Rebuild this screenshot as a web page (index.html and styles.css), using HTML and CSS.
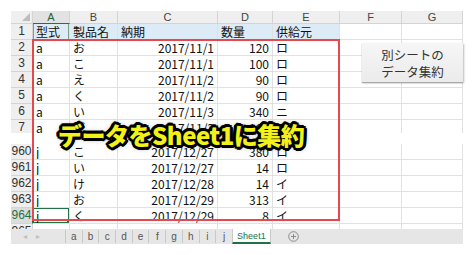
FILE: index.html
```html
<!DOCTYPE html>
<html>
  <head>
    <meta charset="utf-8" />
    <link rel="stylesheet" href="styles.css">
  </head>
  <body>
    <div class="sheet">
      <div class="row head">
        <div class="corner"></div>
        <div class="col cur">A</div>
        <div class="col">B</div>
        <div class="col">C</div>
        <div class="col">D</div>
        <div class="col">E</div>
        <div class="col">F</div>
        <div class="col">G</div>
      </div>

      <div class="row title-row">
        <div class="rh">1</div>
        <div class="c hl a1">型式</div>
        <div class="c hl">製品名</div>
        <div class="c hl">納期</div>
        <div class="c hl">数量</div>
        <div class="c hl">供給元</div>
        <div class="c"></div>
        <div class="c"></div>
      </div>

      <div class="row">
        <div class="rh">2</div>
        <div class="c">a</div><div class="c">お</div><div class="c r">2017/11/1</div><div class="c r">120</div><div class="c">ロ</div><div class="c"></div><div class="c"></div>
      </div>
      <div class="row">
        <div class="rh">3</div>
        <div class="c">a</div><div class="c">こ</div><div class="c r">2017/11/1</div><div class="c r">100</div><div class="c">ロ</div><div class="c"></div><div class="c"></div>
      </div>
      <div class="row">
        <div class="rh">4</div>
        <div class="c">a</div><div class="c">え</div><div class="c r">2017/11/2</div><div class="c r">90</div><div class="c">ロ</div><div class="c"></div><div class="c"></div>
      </div>
      <div class="row">
        <div class="rh">5</div>
        <div class="c">a</div><div class="c">く</div><div class="c r">2017/11/2</div><div class="c r">90</div><div class="c">ロ</div><div class="c"></div><div class="c"></div>
      </div>
      <div class="row">
        <div class="rh">6</div>
        <div class="c">a</div><div class="c">い</div><div class="c r">2017/11/3</div><div class="c r">340</div><div class="c">ニ</div><div class="c"></div><div class="c"></div>
      </div>
      <div class="row short">
        <div class="rh">7</div>
        <div class="c">a</div><div class="c">ど</div><div class="c r">2017/11/3</div><div class="c r">160</div><div class="c">ロ</div><div class="c"></div><div class="c"></div>
      </div>

      <div class="gap"></div>

      <div class="row">
        <div class="rh">960</div>
        <div class="c">j</div><div class="c">こ</div><div class="c r">2017/12/27</div><div class="c r">380</div><div class="c">ロ</div><div class="c"></div><div class="c"></div>
      </div>
      <div class="row">
        <div class="rh">961</div>
        <div class="c">j</div><div class="c">い</div><div class="c r">2017/12/27</div><div class="c r">14</div><div class="c">ロ</div><div class="c"></div><div class="c"></div>
      </div>
      <div class="row">
        <div class="rh">962</div>
        <div class="c">j</div><div class="c">け</div><div class="c r">2017/12/28</div><div class="c r">14</div><div class="c">イ</div><div class="c"></div><div class="c"></div>
      </div>
      <div class="row">
        <div class="rh">963</div>
        <div class="c">j</div><div class="c">お</div><div class="c r">2017/12/29</div><div class="c r">313</div><div class="c">イ</div><div class="c"></div><div class="c"></div>
      </div>
      <div class="row">
        <div class="rh cur">964</div>
        <div class="c sel">j</div><div class="c">く</div><div class="c r">2017/12/29</div><div class="c r">8</div><div class="c">イ</div><div class="c"></div><div class="c"></div>
      </div>
      <div class="row cut">
        <div class="rh">965</div>
        <div class="c"></div><div class="c"></div><div class="c"></div><div class="c"></div><div class="c"></div><div class="c"></div><div class="c"></div>
      </div>

      <div class="tabs">
        <div class="nav"><span>◂</span><span>▸</span></div>
        <div class="tab">a</div>
        <div class="tab">b</div>
        <div class="tab">c</div>
        <div class="tab">d</div>
        <div class="tab">e</div>
        <div class="tab">f</div>
        <div class="tab">g</div>
        <div class="tab">h</div>
        <div class="tab">i</div>
        <div class="tab">j</div>
        <div class="tab active">Sheet1</div>
        <div class="add">
          <svg width="11" height="11" viewBox="0 0 11 11">
            <circle cx="5.5" cy="5.5" r="4.8" fill="none" stroke="#8a8a8a" stroke-width="1"/>
            <path d="M5.5 3v5M3 5.5h5" stroke="#8a8a8a" stroke-width="1"/>
          </svg>
        </div>
      </div>

      <!-- floating objects on the sheet -->
      <div class="range"></div>
      <div class="macro-btn">別シートの<br>データ集約</div>
      <div class="caption">データをSheet1に集約</div>
    </div>
  </body>
</html>
```

FILE: styles.css
```css
body {
  margin: 0;
  background: #fff;
  font-family: "Noto Sans CJK JP", "Noto Sans", sans-serif;
}

.sheet {
  position: relative;
  width: 452px;
  margin: 11px 0 0 11px;
}

.row {
  display: grid;
  grid-template-columns: 22px 37px 48px 100px 55px 67px 62px 61px;
  height: 16px;
}

.row > div {
  box-sizing: border-box;
  border-right: 1px solid #e1e1e1;
  border-bottom: 1px solid #e1e1e1;
  font-size: 12px;
  line-height: 15px;
  white-space: nowrap;
  overflow: hidden;
}

.row.head {
  height: 13px;
}

.row.head > div {
  background: #efefef;
  border-color: #d4d4d4;
  font-family: "Liberation Sans", Arial, sans-serif;
  font-size: 11px;
  line-height: 12px;
  color: #444;
  text-align: center;
}

.row.head .col.cur {
  background: #e2e2e2;
  border-bottom: 1px solid #217346;
  color: #2a5d3c;
}

.corner {
  position: relative;
}

.corner::after {
  content: "";
  position: absolute;
  right: 2px;
  bottom: 2px;
  border-left: 8px solid transparent;
  border-bottom: 8px solid #bdbdbd;
}

.rh {
  background: #efefef;
  border-color: #d4d4d4 !important;
  font-family: "Liberation Sans", Arial, sans-serif;
  color: #333;
  text-align: center;
}

.rh.cur {
  background: #dcdcdc;
  color: #217346;
  border-right: 1px solid #217346 !important;
}

.c {
  padding: 0 3px;
  color: #111;
}

.c.r {
  text-align: right;
}

.c.hl {
  background: #ddebf7;
}

.c.a1 {
  box-shadow: inset 1px 0 0 #7aa08a, inset -1px 0 0 #7aa08a;
}

.c.sel {
  position: relative;
  box-shadow: inset 0 0 0 1px #217346;
}

.c.sel::after {
  content: "";
  position: absolute;
  right: -1px;
  bottom: -1px;
  width: 3px;
  height: 3px;
  background: #217346;
}

.row.short {
  height: 13px;
}

.row.short > div {
  border-bottom: none;
}

.gap {
  height: 11px;
}

.row.cut {
  height: 5px;
  overflow: hidden;
}

.row.cut > div {
  height: 16px;
}

.tabs {
  display: flex;
  align-items: stretch;
  height: 15px;
  background: #e6e6e6;
  font-family: "Liberation Sans", Arial, sans-serif;
  font-size: 10px;
  color: #555;
}

.nav {
  display: flex;
  gap: 9px;
  width: 54px;
  padding-left: 12px;
  box-sizing: border-box;
  color: #c0c0c0;
  font-size: 8px;
  line-height: 15px;
}

.tab {
  width: 16.7px;
  border-left: 1px solid #c9c9c9;
  margin: 1px 0;
  box-sizing: border-box;
  text-align: center;
  line-height: 13px;
}

.tab.active {
  width: 39px;
  margin: 0 0 0 0;
  border-left: 1px solid #c9c9c9;
  border-right: 1px solid #c9c9c9;
  background: #fff;
  border-bottom: 2px solid #217346;
  color: #217346;
  font-size: 9px;
  line-height: 14px;
}

.add {
  display: flex;
  align-items: center;
  margin-left: 17px;
}

.range {
  position: absolute;
  left: 21px;
  top: 28px;
  width: 308px;
  height: 182px;
  box-sizing: border-box;
  border: 2px solid #e5484d;
}

.macro-btn {
  position: absolute;
  left: 351px;
  top: 32px;
  width: 101px;
  height: 39px;
  box-sizing: border-box;
  padding-top: 3px;
  background: linear-gradient(#f6f6f6, #ebebeb);
  box-shadow: 0 1px 1px #a9a9a9, 1px 1px 2px rgba(0, 0, 0, 0.25);
  text-align: center;
  font-size: 12.5px;
  line-height: 17px;
  color: #333;
}

.caption {
  position: absolute;
  left: 47px;
  top: 109px;
  font-size: 24px;
  line-height: 30px;
  font-weight: 900;
  color: #f2f21a;
  letter-spacing: -0.5px;
  text-shadow:
    2px 0 0 #000, -2px 0 0 #000, 0 2px 0 #000, 0 -2px 0 #000,
    2px 2px 0 #000, -2px -2px 0 #000, 2px -2px 0 #000, -2px 2px 0 #000,
    3px 0 0 #000, -3px 0 0 #000, 0 3px 0 #000, 0 -3px 0 #000,
    3px 1px 0 #000, -3px -1px 0 #000, 1px 3px 0 #000, -1px -3px 0 #000,
    0 0 6px rgba(0, 0, 0, 0.6);
}
```
